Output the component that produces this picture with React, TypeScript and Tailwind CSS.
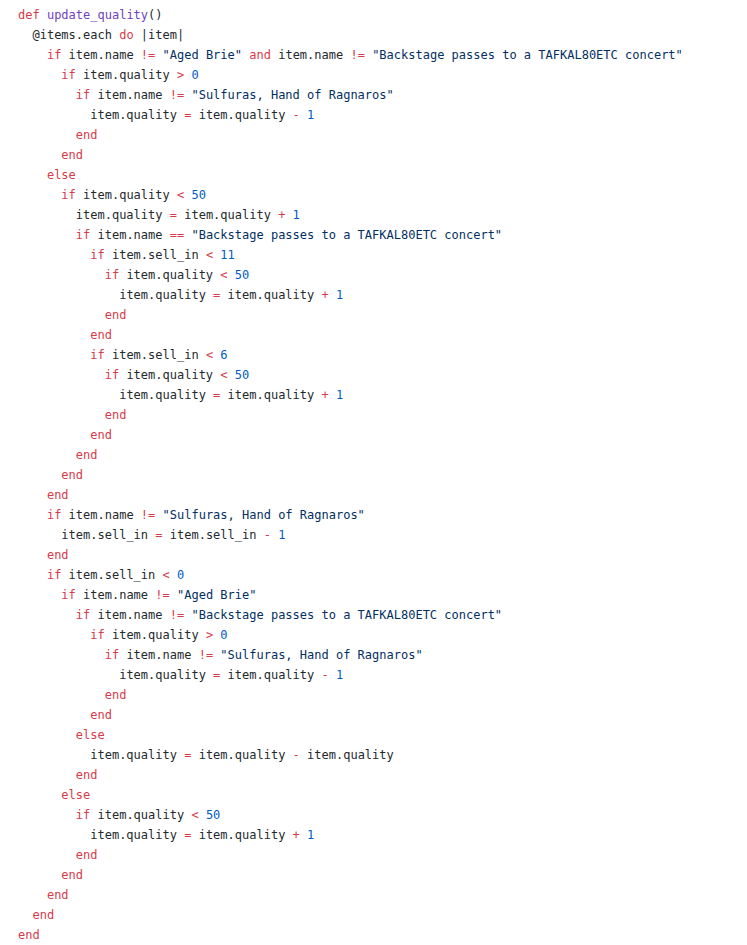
const code = `def update_quality()
  @items.each do |item|
    if item.name != "Aged Brie" and item.name != "Backstage passes to a TAFKAL80ETC concert"
      if item.quality > 0
        if item.name != "Sulfuras, Hand of Ragnaros"
          item.quality = item.quality - 1
        end
      end
    else
      if item.quality < 50
        item.quality = item.quality + 1
        if item.name == "Backstage passes to a TAFKAL80ETC concert"
          if item.sell_in < 11
            if item.quality < 50
              item.quality = item.quality + 1
            end
          end
          if item.sell_in < 6
            if item.quality < 50
              item.quality = item.quality + 1
            end
          end
        end
      end
    end
    if item.name != "Sulfuras, Hand of Ragnaros"
      item.sell_in = item.sell_in - 1
    end
    if item.sell_in < 0
      if item.name != "Aged Brie"
        if item.name != "Backstage passes to a TAFKAL80ETC concert"
          if item.quality > 0
            if item.name != "Sulfuras, Hand of Ragnaros"
              item.quality = item.quality - 1
            end
          end
        else
          item.quality = item.quality - item.quality
        end
      else
        if item.quality < 50
          item.quality = item.quality + 1
        end
      end
    end
  end
end`;

const keywords = ["def", "do", "if", "and", "else", "end"];

// split a line into coloured pieces
function tokens(line: string) {
  const re = /("[^"]*")|(\b\d+\b)|(!=|==|[<>=+-])|([A-Za-z_@][\w.]*)|(\s+|[^\s])/g;
  const out: { t: string; c: string }[] = [];
  let m: RegExpExecArray | null;
  let afterDef = false;
  while ((m = re.exec(line))) {
    let c = "text-[#24292e]";
    if (m[1]) c = "text-[#032f62]";
    else if (m[2]) c = "text-[#005cc5]";
    else if (m[3]) c = "text-[#d73a49]";
    else if (m[4]) {
      if (keywords.includes(m[4])) c = "text-[#d73a49]";
      else if (afterDef) c = "text-[#6f42c1]";
      afterDef = m[4] === "def";
    }
    out.push({ t: m[0], c });
  }
  return out;
}

export default function App() {
  return (
    <div className="min-h-screen bg-white pl-[18px] pt-[5px]">
      <pre className="font-['DejaVu_Sans_Mono',monospace] text-[12px] leading-[20px]">
        {code.split("\n").map((line, i) => (
          <div key={i}>
            {tokens(line).map((tk, j) => (
              <span key={j} className={tk.c}>{tk.t}</span>
            ))}
          </div>
        ))}
      </pre>
    </div>
  );
}
